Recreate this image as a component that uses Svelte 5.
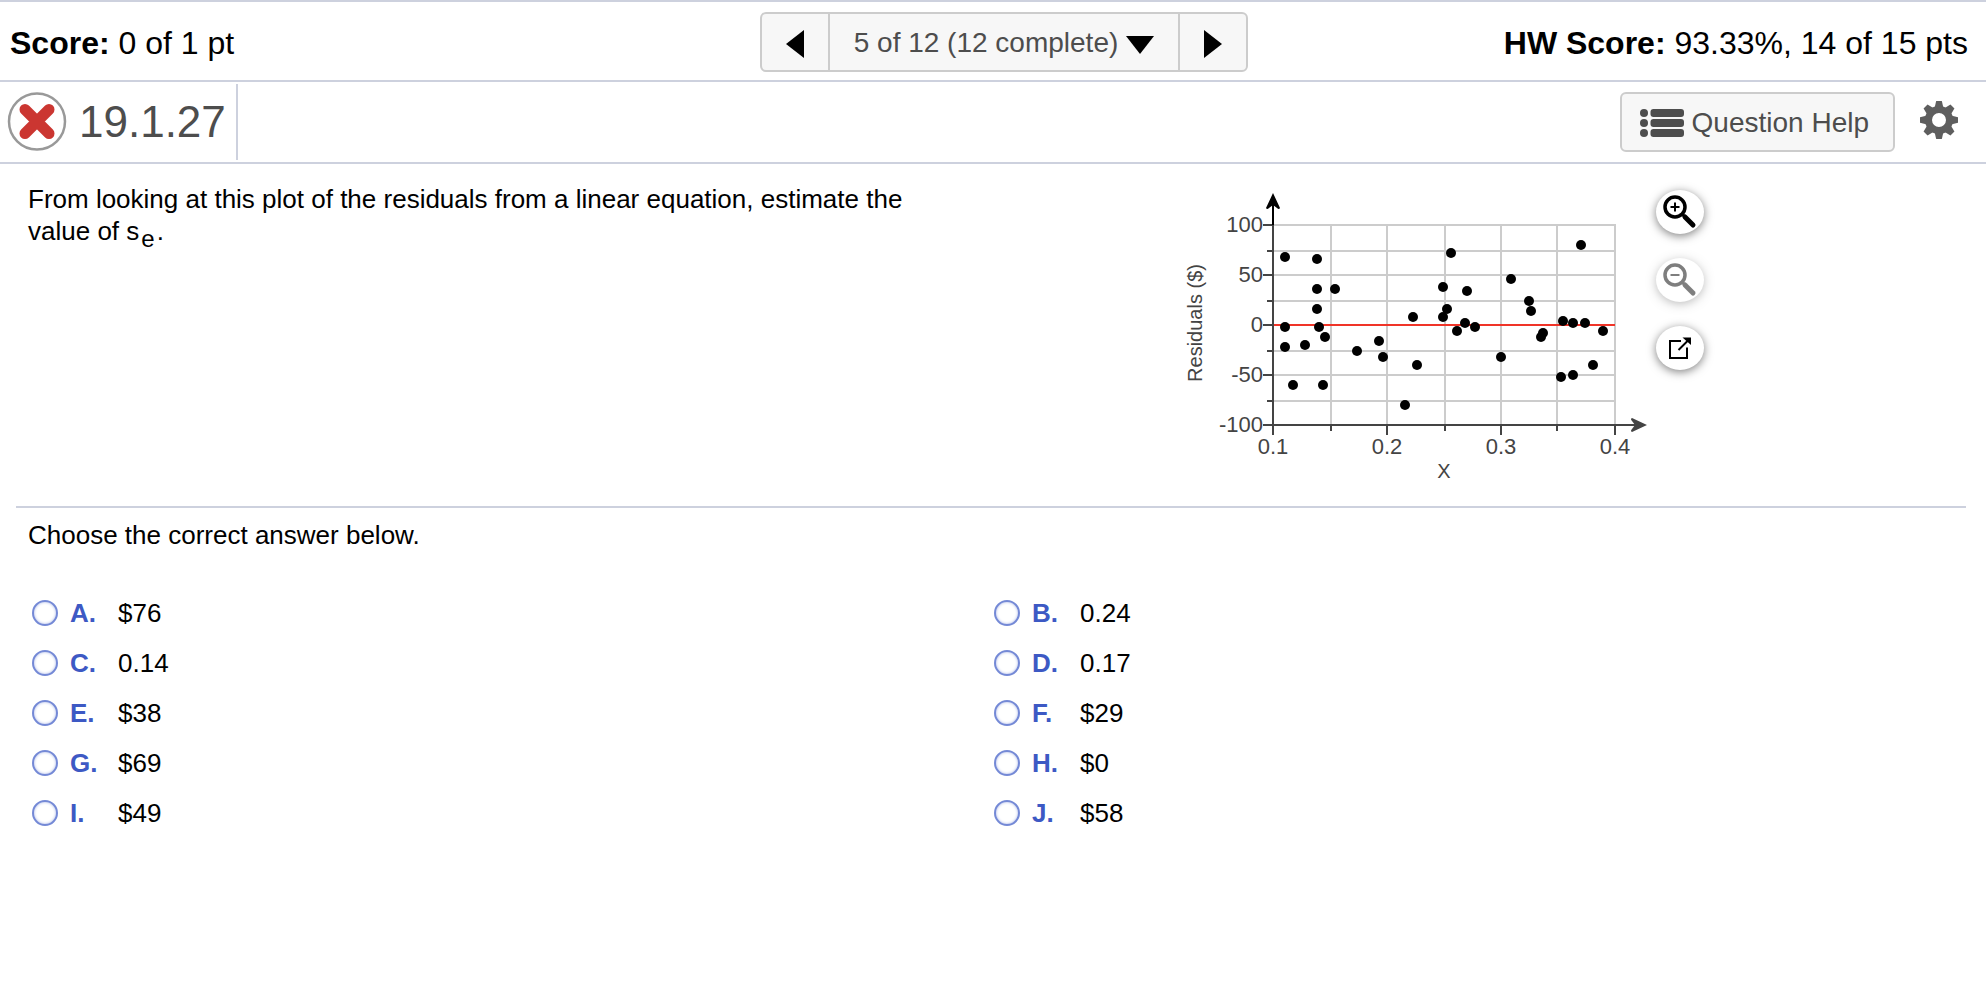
<script lang="ts">
	const choices = [
		{ letter: 'A', text: '$76' },
		{ letter: 'B', text: '0.24' },
		{ letter: 'C', text: '0.14' },
		{ letter: 'D', text: '0.17' },
		{ letter: 'E', text: '$38' },
		{ letter: 'F', text: '$29' },
		{ letter: 'G', text: '$69' },
		{ letter: 'H', text: '$0' },
		{ letter: 'I', text: '$49' },
		{ letter: 'J', text: '$58' }
	];

	let selected = $state('');

	// plot positions are measured from the top left corner of the grid
	const columns = [58, 114, 172, 228, 284, 342];
	const rows = [0, 26, 50, 76, 126, 150, 176];
	const yTicks = [0, 50, 100, 150, 200];
	const yMinor = [26, 76, 126, 176];
	const xTicks = [0, 114, 228, 342];
	const xMinor = [58, 172, 284];
	const yLabels = ['100', '50', '0', '-50', '-100'];
	const xLabels = ['0.1', '0.2', '0.3', '0.4'];

	const points = [
		[12, 32], [44, 34], [44, 64], [62, 64], [44, 84], [12, 102], [46, 102],
		[52, 112], [12, 122], [32, 120], [84, 126], [106, 116], [110, 132],
		[144, 140], [20, 160], [50, 160], [132, 180], [140, 92], [178, 28],
		[170, 62], [194, 66], [174, 84], [170, 92], [192, 98], [184, 106],
		[202, 102], [238, 54], [256, 76], [258, 86], [270, 108], [268, 112],
		[228, 132], [290, 96], [300, 98], [312, 98], [330, 106], [320, 140],
		[288, 152], [300, 150], [308, 20]
	];

	const teeth = [0, 45, 90, 135, 180, 225, 270, 315];
</script>

<div class="page">
	<header class="score-bar">
		<div class="score"><strong>Score:</strong> 0 of 1 pt</div>
		<nav class="pager" aria-label="Questions">
			<button type="button" class="step" aria-label="Previous question">
				<svg width="18" height="28" viewBox="0 0 18 28"><path d="M18 0v28L0 14z" /></svg>
			</button>
			<button type="button" class="current" aria-haspopup="menu">
				5 of 12 (12 complete)
				<svg width="28" height="18" viewBox="0 0 28 18"><path d="M0 0h28L14 18z" /></svg>
			</button>
			<button type="button" class="step" aria-label="Next question">
				<svg width="18" height="28" viewBox="0 0 18 28"><path d="M0 0l18 14L0 28z" /></svg>
			</button>
		</nav>
		<div class="score right"><strong>HW Score:</strong> 93.33%, 14 of 15 pts</div>
	</header>

	<div class="title-bar">
		<div class="title">
			<svg width="60" height="60" viewBox="0 0 60 60" role="img" aria-label="Incorrect">
				<circle cx="30" cy="29.5" r="28" fill="#fff" stroke="#999" stroke-width="2.5" />
				<path d="M18 17.5l24 24M42 17.5l-24 24" stroke="#cb3631" stroke-width="11" stroke-linecap="round" />
			</svg>
			<h1>19.1.27</h1>
		</div>
		<div class="tools">
			<button type="button" class="help">
				<svg width="44" height="30" viewBox="0 0 44 30" fill="#4d4d4d">
					{#each [1, 11, 21] as y}
						<circle cx="4" cy={y + 4} r="4" />
						<rect x="10.5" {y} width="33.5" height="8" rx="3" />
					{/each}
				</svg>
				Question Help
			</button>
			<button type="button" class="gear" aria-label="Settings">
				<svg width="40" height="40" viewBox="-20 -20 40 40">
					<circle r="10.5" fill="none" stroke="#5e5e5e" stroke-width="7" />
					{#each teeth as angle}
						<path d="M-4.5-12L-2.8-19h5.6L4.5-12z" fill="#5e5e5e" transform="rotate({angle})" />
					{/each}
				</svg>
			</button>
		</div>
	</div>

	<main>
		<section class="question">
			<p>
				From looking at this plot of the residuals from a linear equation, estimate the value of
				s<sub>e</sub>.
			</p>
			<div class="figure">
				<svg
					class="plot"
					width="470"
					height="300"
					viewBox="0 0 470 300"
					role="img"
					aria-label="Scatterplot of residuals in dollars against x"
				>
					<g transform="translate(93 42)">
						<g stroke="#ccc" stroke-width="2">
							{#each columns as x}
								<line x1={x} x2={x} y1="-1" y2="200" />
							{/each}
							{#each rows as y}
								<line x1="0" x2="343" y1={y} y2={y} />
							{/each}
						</g>
						<g stroke="#444" stroke-width="2">
							<path d="M0 0v200H362" fill="none" />
							{#each yTicks as y}
								<line x1="-10" x2="0" y1={y} y2={y} />
							{/each}
							{#each yMinor as y}
								<line x1="-6" x2="0" y1={y} y2={y} />
							{/each}
							{#each xTicks as x}
								<line x1={x} x2={x} y1="200" y2="210" />
							{/each}
							{#each xMinor as x}
								<line x1={x} x2={x} y1="200" y2="206" />
							{/each}
						</g>
						<line x1="0" x2="0" y1="0" y2="-24" stroke="#000" stroke-width="2" />
						<path d="M0-32L7-17Q6-15 4-17L0-20L-4-17Q-6-15-7-17z" />
						<path d="M374 200L359 207Q357 206 359 204L362 200L359 196Q357 194 359 193z" fill="#444" />
						<line x1="1" x2="342" y1="100" y2="100" stroke="#f03428" stroke-width="2" />
						{#each points as [x, y]}
							<circle cx={x} cy={y} r="5" />
						{/each}
						<g class="labels">
							{#each yLabels as label, i}
								<text x="-10" y={yTicks[i] + 7} text-anchor="end">{label}</text>
							{/each}
							{#each xLabels as label, i}
								<text x={xTicks[i]} y="229" text-anchor="middle">{label}</text>
							{/each}
							<text class="axis" x="171" y="253" text-anchor="middle">X</text>
							<text class="axis" transform="translate(-71 98) rotate(-90)" text-anchor="middle">Residuals ($)</text>
						</g>
					</g>
				</svg>
				<div class="zoom">
					<button type="button" aria-label="Zoom in">
						<svg width="48" height="44" viewBox="0 0 48 44" fill="none" stroke="#000">
							<circle cx="19" cy="17" r="10" stroke-width="3.5" />
							<path d="M14.5 17h9M19 12.5v9" stroke-width="2" />
							<path d="M26.5 24.5l3 3" stroke-width="3" />
							<path d="M29 27l8 8" stroke-width="5" stroke-linecap="round" />
						</svg>
					</button>
					<button type="button" aria-label="Zoom out" disabled>
						<svg width="48" height="44" viewBox="0 0 48 44" fill="none" stroke="#000">
							<circle cx="19" cy="17" r="10" stroke-width="3.5" />
							<path d="M14.5 17h9" stroke-width="2" />
							<path d="M26.5 24.5l3 3" stroke-width="3" />
							<path d="M29 27l8 8" stroke-width="5" stroke-linecap="round" />
						</svg>
					</button>
					<button type="button" aria-label="Open in new window">
						<svg width="48" height="44" viewBox="0 0 48 44" fill="none" stroke="#000" stroke-width="2">
							<path d="M25 15H14v17h17V21.5" />
							<path d="M22.5 24L32 14.5" />
							<path d="M26.5 11.5H35V19z" fill="#000" stroke="none" />
						</svg>
					</button>
				</div>
			</div>
		</section>

		<fieldset class="answers">
			<legend>Choose the correct answer below.</legend>
			<div class="choices">
				{#each choices as choice (choice.letter)}
					<label>
						<input type="radio" name="answer" value={choice.letter} bind:group={selected} />
						<b>{choice.letter}.</b>
						<span>{choice.text}</span>
					</label>
				{/each}
			</div>
		</fieldset>
	</main>
</div>

<style>
	:global(body) {
		margin: 0;
		background: #fff;
	}

	.page {
		--line: #cdd1de;
		border-top: 2px solid var(--line);
		color: #000;
		font-family: 'Liberation Sans', Arial, Helvetica, sans-serif;
		font-size: 26px;
		line-height: 32px;
	}

	button {
		padding: 0;
		border: 0;
		background: none;
		color: #4d4d4d;
		font: inherit;
		font-size: 28px;
		cursor: pointer;
	}

	svg {
		display: block;
		flex: none;
	}

	.score-bar {
		display: grid;
		grid-template-columns: 1fr auto 1fr;
		align-items: center;
		padding: 10px 18px 8px 10px;
		border-bottom: 2px solid var(--line);
	}

	.score {
		padding-top: 2px;
		font-size: 32px;
	}

	.right {
		text-align: right;
	}

	.pager {
		display: flex;
		height: 56px;
		margin-left: 30px;
		border: 2px solid #ccc;
		border-radius: 6px;
		background: #f7f7f7;
	}

	.step {
		display: flex;
		align-items: center;
		justify-content: center;
		width: 66px;
		padding-top: 4px;
	}

	.current {
		display: flex;
		align-items: center;
		gap: 8px;
		padding: 2px 24px 0;
		border-left: 2px solid #ccc;
		border-right: 2px solid #ccc;
	}

	.current svg {
		margin-top: 4px;
	}

	.title-bar {
		display: flex;
		align-items: center;
		justify-content: space-between;
		padding: 2px 27px 2px 7px;
		border-bottom: 2px solid var(--line);
	}

	.title {
		display: flex;
		align-items: center;
		gap: 12px;
		height: 76px;
		padding-right: 10px;
		border-right: 2px solid var(--line);
	}

	h1 {
		margin: 0;
		color: #4d4d4d;
		font-size: 44px;
		font-weight: 400;
	}

	.tools {
		display: flex;
		align-items: center;
		gap: 24px;
	}

	.help {
		display: flex;
		align-items: center;
		gap: 8px;
		height: 60px;
		padding: 2px 24px 0 18px;
		border: 2px solid #ccc;
		border-radius: 6px;
		background: #f7f7f7;
	}

	.gear {
		padding-bottom: 4px;
	}

	.question {
		display: grid;
		grid-template-columns: 22fr 15fr;
		margin: 0 20px 0 16px;
		padding: 19px 0 23px 12px;
		border-bottom: 2px solid var(--line);
	}

	p {
		max-width: 900px;
		margin: 0;
	}

	sub {
		margin: 0 2px;
		font-size: 24px;
		line-height: 0;
		vertical-align: -7px;
	}

	.figure {
		display: flex;
		align-items: flex-start;
	}

	.labels {
		fill: #444;
		font-size: 22px;
	}

	.axis {
		font-size: 20px;
	}

	.zoom {
		display: flex;
		flex-direction: column;
		gap: 24px;
		margin: 7px 0 0 6px;
	}

	.zoom button {
		border-radius: 50%;
		background: #fff;
		box-shadow: 0 2px 10px rgba(0, 0, 0, 0.5);
	}

	.zoom button:disabled {
		opacity: 0.5;
		cursor: default;
	}

	.answers {
		margin: 0;
		padding: 11px 30px 0 32px;
		border: 0;
	}

	legend {
		float: left;
		width: 100%;
		margin: 0 0 37px -4px;
		padding: 0;
	}

	.choices {
		display: grid;
		grid-template-columns: 1fr 1fr;
		clear: both;
	}

	label {
		display: flex;
		align-items: center;
		height: 50px;
	}

	input {
		width: 26px;
		height: 26px;
		margin: 0 12px 0 0;
		border: 2px solid #7489d6;
		border-radius: 50%;
		background: #fff;
		box-shadow: inset 0 0 3px #a9b6e6;
		appearance: none;
	}

	input:checked {
		background: radial-gradient(#3d59c4 40%, #fff 45%);
	}

	b {
		width: 48px;
		color: #3d59c4;
	}
</style>
